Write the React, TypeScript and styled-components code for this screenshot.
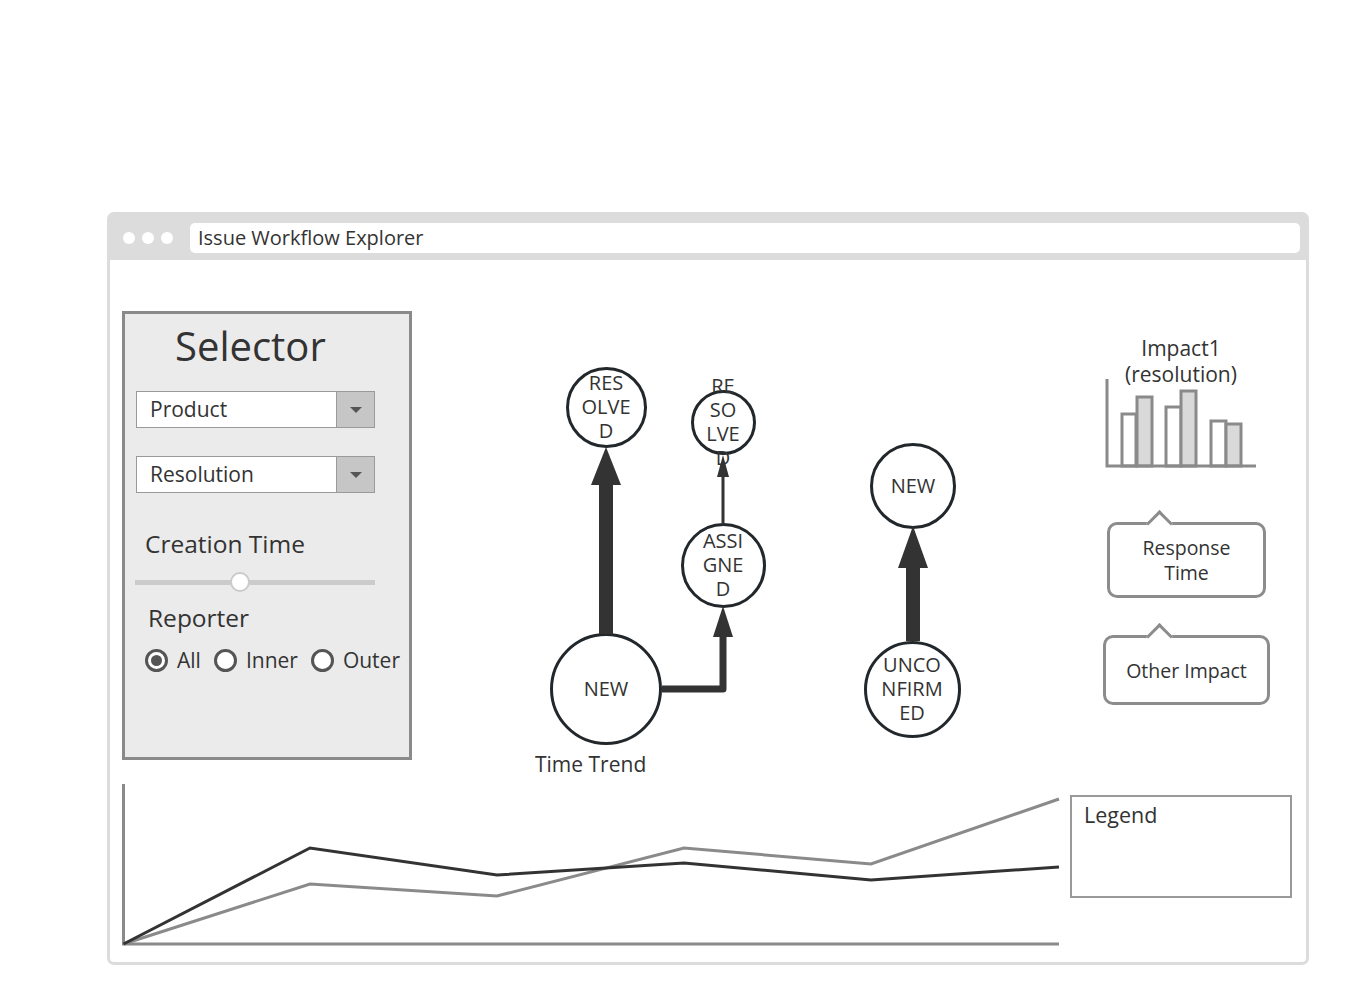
import React from 'react'
import styled, { createGlobalStyle } from 'styled-components'

const Global = createGlobalStyle`
body {
  margin: 0;
  background: #fff;
  font-family: "Open Sans", "Noto Sans", sans-serif;
  color: #333;
}
`

const Page = styled.div`
padding: 212px 0 0 107px;
`

const Window = styled.div`
width: 1202px;
height: 753px;
box-sizing: border-box;
border: 3px solid #dcdcdc;
border-radius: 7px;
background: #fff;
display: flex;
flex-direction: column;
`

const TitleBar = styled.div`
height: 45px;
flex: none;
background: #dcdcdc;
display: flex;
align-items: center;
padding: 0 6px 0 13px;
`

const Dot = styled.span`
width: 12px;
height: 12px;
border-radius: 50%;
background: #fff;
margin-right: 7px;
`

const AddressField = styled.div`
flex: 1;
height: 30px;
margin-left: 10px;
background: #fff;
border-radius: 5px;
display: flex;
align-items: center;
padding-left: 8px;
font-size: 20px;
`

const Content = styled.div`
flex: 1;
padding: 51px 0 0 12px;
`

const TopRow = styled.div`
display: flex;
align-items: flex-start;
height: 467px;
`

const Selector = styled.div`
width: 290px;
height: 449px;
box-sizing: border-box;
border: 3px solid #8a8a8a;
background: #ebebeb;
display: flex;
flex-direction: column;
align-items: flex-start;
`

const SelectorTitle = styled.div`
font-size: 40px;
line-height: 46px;
margin: 9px 0 0 50px;
`

const Select = styled.div<{ top: number }>`
margin: ${(p) => p.top}px 0 0 11px;
width: 239px;
height: 37px;
box-sizing: border-box;
border: 1px solid #9a9a9a;
background: #fff;
display: flex;
`

const SelectText = styled.div`
flex: 1;
padding-left: 13px;
font-size: 21px;
line-height: 34px;
`

const SelectButton = styled.div`
width: 37px;
border-left: 1px solid #9a9a9a;
background: #c6c6c6;
display: flex;
align-items: center;
justify-content: center;
&::after {
  content: '';
  border-left: 6px solid transparent;
  border-right: 6px solid transparent;
  border-top: 6px solid #555;
}
`

const FieldLabel = styled.div<{ top: number; left: number }>`
margin: ${(p) => p.top}px 0 0 ${(p) => p.left}px;
font-size: 24.5px;
line-height: 32px;
`

const Slider = styled.div`
margin: 12px 0 0 10px;
width: 240px;
height: 20px;
position: relative;
display: flex;
align-items: center;
&::before {
  content: '';
  width: 100%;
  height: 5px;
  background: #cbcbcb;
}
`

const Thumb = styled.span`
position: absolute;
left: 95px;
top: 0;
width: 20px;
height: 20px;
box-sizing: border-box;
border-radius: 50%;
border: 2px solid #cbcbcb;
background: #fff;
`

const RadioRow = styled.div`
margin: 13px 0 0 20px;
display: flex;
align-items: center;
height: 26px;
font-size: 21px;
`

const Radio = styled.span<{ checked?: boolean }>`
width: 23px;
height: 23px;
box-sizing: border-box;
border-radius: 50%;
border: 3px solid #555;
background: #fff;
display: flex;
align-items: center;
justify-content: center;
margin-right: 9px;
&::after {
  content: '';
  display: ${(p) => (p.checked ? 'block' : 'none')};
  width: 11px;
  height: 11px;
  border-radius: 50%;
  background: #555;
}
`

const RadioLabel = styled.span`
margin-right: 13px;
`

const GraphColumn = styled.div`
margin: 49px 0 0 118px;
width: 450px;
`

const Canvas = styled.div`
position: relative;
height: 390px;
`

const Edges = styled.svg`
position: absolute;
left: 0;
top: 0;
z-index: 1;
overflow: visible;
`

const Node = styled.div<{ x: number; y: number; size: number }>`
position: absolute;
left: ${(p) => p.x - p.size / 2}px;
top: ${(p) => p.y - p.size / 2}px;
width: ${(p) => p.size}px;
height: ${(p) => p.size}px;
box-sizing: border-box;
border: 3px solid #22272b;
border-radius: 50%;
background: #fff;
display: flex;
flex-direction: column;
align-items: center;
justify-content: center;
font-size: 20px;
line-height: 24px;
white-space: nowrap;
`

const ChartTitle = styled.div`
margin-left: 5px;
font-size: 21px;
line-height: 28px;
`

const ImpactColumn = styled.div`
margin: 24px 0 0 111px;
width: 180px;
display: flex;
flex-direction: column;
align-items: center;
`

const ImpactTitle = styled.div`
font-size: 21px;
line-height: 26px;
text-align: center;
margin-bottom: -10px;
`

const Callout = styled.div<{ top: number; width: number; height: number; left: number }>`
align-self: flex-start;
position: relative;
margin: ${(p) => p.top}px 0 0 ${(p) => p.left}px;
width: ${(p) => p.width}px;
height: ${(p) => p.height}px;
box-sizing: border-box;
border: 3px solid #8c8c8c;
border-radius: 10px;
background: #fff;
display: flex;
align-items: center;
justify-content: center;
text-align: center;
font-size: 19.5px;
line-height: 25px;
&::before {
  content: '';
  position: absolute;
  top: -11px;
  left: ${(p) => 1159 - 1091 - p.left - 3 - 9}px;
  width: 16px;
  height: 16px;
  background: #fff;
  border-top: 3px solid #8c8c8c;
  border-left: 3px solid #8c8c8c;
  transform: rotate(45deg);
}
`

const BottomRow = styled.div`
display: flex;
align-items: flex-start;
margin-top: 6px;
`

const Legend = styled.div`
margin: 11px 0 0 8px;
width: 222px;
height: 103px;
box-sizing: border-box;
border: 2px solid #999;
padding: 3px 0 0 12px;
font-size: 21.5px;
line-height: 30px;
`

type NodeData = { x: number; y: number; size: number; lines: string[] }

const nodes: NodeData[] = [
  { x: 76, y: 47, size: 81, lines: ['RES', 'OLVE', 'D'] },
  { x: 193, y: 62, size: 65, lines: ['RE', 'SO', 'LVE', 'D'] },
  { x: 193, y: 205, size: 85, lines: ['ASSI', 'GNE', 'D'] },
  { x: 76, y: 329, size: 112, lines: ['NEW'] },
  { x: 383, y: 126, size: 86, lines: ['NEW'] },
  { x: 382, y: 329, size: 97, lines: ['UNCO', 'NFIRM', 'ED'] },
]

const dark = [
  [1.5, 160], [188, 64], [375, 91], [562, 79], [749, 96], [937, 83],
]
const grey = [
  [1.5, 160], [188, 100], [375, 112], [562, 64], [749, 80], [937, 15],
]
const pts = (p: number[][]) => p.map((q) => q.join(',')).join(' ')

const bars = [
  { x: 18, w: 14, top: 37, fill: '#fff' },
  { x: 33, w: 15, top: 20, fill: '#d9d9d9' },
  { x: 62, w: 15, top: 30, fill: '#fff' },
  { x: 77, w: 15, top: 14, fill: '#d9d9d9' },
  { x: 107, w: 15, top: 44, fill: '#fff' },
  { x: 122, w: 15, top: 47, fill: '#d9d9d9' },
]

const App = () => {
  return (
    <Page>
      <Global />
      <Window>
        <TitleBar>
          <Dot />
          <Dot />
          <Dot />
          <AddressField>Issue Workflow Explorer</AddressField>
        </TitleBar>
        <Content>
          <TopRow>
            <Selector>
              <SelectorTitle>Selector</SelectorTitle>
              <Select top={22}>
                <SelectText>Product</SelectText>
                <SelectButton />
              </Select>
              <Select top={28}>
                <SelectText>Resolution</SelectText>
                <SelectButton />
              </Select>
              <FieldLabel top={35} left={20}>Creation Time</FieldLabel>
              <Slider>
                <Thumb />
              </Slider>
              <FieldLabel top={10} left={23}>Reporter</FieldLabel>
              <RadioRow>
                <Radio checked />
                <RadioLabel>All</RadioLabel>
                <Radio />
                <RadioLabel>Inner</RadioLabel>
                <Radio />
                <RadioLabel>Outer</RadioLabel>
              </RadioRow>
            </Selector>

            <GraphColumn>
              <Canvas>
                {nodes.map((n, i) => (
                  <Node key={i} x={n.x} y={n.y} size={n.size}>
                    {n.lines.map((l) => (
                      <span key={l}>{l}</span>
                    ))}
                  </Node>
                ))}
                <Edges width="450" height="390" viewBox="0 0 450 390">
                  <g fill="#333">
                    <rect x="69" y="124" width="14" height="150" />
                    <polygon points="61,125 91,125 76,87" />
                    <rect x="191.5" y="115" width="3" height="50" />
                    <polygon points="187,117 199,117 193,95" />
                    <polygon points="183,277 203,277 193,246" />
                    <rect x="376" y="207" width="14" height="74" />
                    <polygon points="368,208 398,208 383,166" />
                  </g>
                  <path
                    d="M132 329 H193 V275"
                    fill="none"
                    stroke="#333"
                    strokeWidth="7"
                    strokeLinejoin="round"
                  />
                </Edges>
              </Canvas>
              <ChartTitle>Time Trend</ChartTitle>
            </GraphColumn>

            <ImpactColumn>
              <ImpactTitle>
                Impact1
                <br />
                (resolution)
              </ImpactTitle>
              <svg width="154" height="92" viewBox="0 0 154 92">
                {bars.map((b, i) => (
                  <rect
                    key={i}
                    x={b.x}
                    y={b.top}
                    width={b.w}
                    height={89 - b.top}
                    fill={b.fill}
                    stroke="#8a8a8a"
                    strokeWidth="3"
                  />
                ))}
                <path d="M3 2 V89 H152" fill="none" stroke="#8a8a8a" strokeWidth="3" />
              </svg>
              <Callout top={53} left={16} width={159} height={76}>
                Response
                <br />
                Time
              </Callout>
              <Callout top={37} left={12} width={167} height={70}>
                Other Impact
              </Callout>
            </ImpactColumn>
          </TopRow>

          <BottomRow>
            <svg width="940" height="164" viewBox="0 0 940 164">
              <path d="M1.5 0 V160 H937" fill="none" stroke="#8a8a8a" strokeWidth="3" />
              <polyline points={pts(grey)} fill="none" stroke="#8a8a8a" strokeWidth="3" />
              <polyline points={pts(dark)} fill="none" stroke="#333" strokeWidth="3" />
            </svg>
            <Legend>Legend</Legend>
          </BottomRow>
        </Content>
      </Window>
    </Page>
  )
}

export default App
